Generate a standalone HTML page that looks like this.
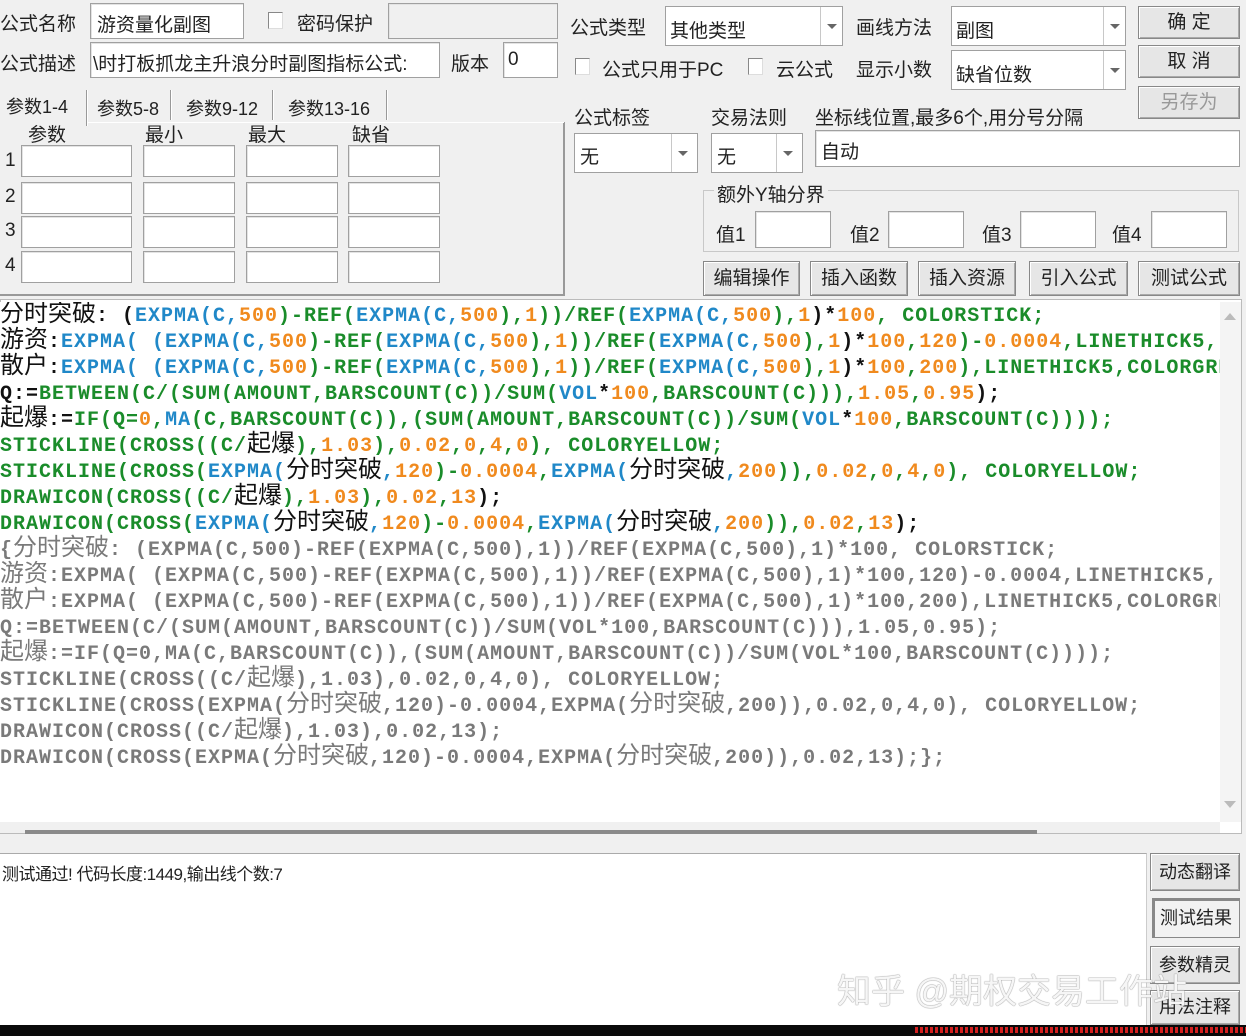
<!DOCTYPE html>
<html><head><meta charset="utf-8">
<style>
*{box-sizing:border-box;margin:0;padding:0}
body{width:1246px;height:1036px;background:#f0f0f0;position:relative;overflow:hidden;font-family:"Liberation Sans","Noto Sans CJK SC",sans-serif;font-size:19px;color:#222}
.a{position:absolute;white-space:nowrap}
.in{position:absolute;background:#fff;border:1px solid #a0a0a0;box-shadow:inset 1px 1px 0 #e3e3e3}
.dd{position:absolute;background:#fff;border:1px solid #a0a0a0}
.dd .ar{position:absolute;right:0;top:0;bottom:0;width:22px;border-left:1px solid #c8c8c8}
.dd .ar:after{content:"";position:absolute;left:6px;top:50%;margin-top:-2px;border-left:5px solid transparent;border-right:5px solid transparent;border-top:5px solid #666}
.btn{position:absolute;background:#e6e6e6;border:1px solid #888;box-shadow:inset 1px 1px 0 #fff,inset -1px -1px 0 #aaa;text-align:center;font-size:19px;color:#222}
.cb{position:absolute;width:15px;height:17px;border:1px solid #888;background:#fff;border-right-color:#ddd;border-bottom-color:#ddd}
#code{position:absolute;left:0;top:302px;width:1220px;height:520px;background:#fff;overflow:hidden}
.ln{position:absolute;left:0;height:26px;white-space:pre;font-family:"Liberation Mono","Noto Sans CJK SC",monospace;font-weight:bold;font-size:20px;letter-spacing:1px;line-height:26px}
.z{font-family:"Noto Sans CJK SC",sans-serif;font-weight:normal;font-size:24px;letter-spacing:0;line-height:0}
.b{color:#2088c8}.g{color:#1a8c2a}.o{color:#f08a1e}.k{color:#111}
.gr{color:#7a7a7a}
.sep{position:absolute;top:90px;width:2px;height:30px;background:#999;border-right:1px solid #fff}
</style></head><body>

<div class="a" style="left:0;top:9px">公式名称</div>
<div class="in" style="left:90px;top:3px;width:154px;height:36px"><span class="a" style="left:6px;top:6px">游资量化副图</span></div>
<div class="cb" style="left:268px;top:12px"></div>
<div class="a" style="left:297px;top:9px">密码保护</div>
<div class="in" style="left:388px;top:3px;width:170px;height:36px;background:#f0f0f0"></div>

<div class="a" style="left:0;top:49px">公式描述</div>
<div class="in" style="left:90px;top:42px;width:350px;height:36px;overflow:hidden"><span class="a" style="left:2px;top:6px">\时打板抓龙主升浪分时副图指标公式:</span></div>
<div class="a" style="left:451px;top:49px">版本</div>
<div class="in" style="left:503px;top:42px;width:55px;height:36px"><span class="a" style="left:4px;top:6px">0</span></div>

<div class="a" style="left:570px;top:13px">公式类型</div>
<div class="dd" style="left:665px;top:6px;width:178px;height:40px"><span class="a" style="left:4px;top:9px">其他类型</span><div class="ar"></div></div>
<div class="a" style="left:856px;top:13px">画线方法</div>
<div class="dd" style="left:951px;top:6px;width:175px;height:40px"><span class="a" style="left:4px;top:9px">副图</span><div class="ar"></div></div>

<div class="cb" style="left:575px;top:58px"></div>
<div class="a" style="left:602px;top:55px">公式只用于PC</div>
<div class="cb" style="left:748px;top:58px"></div>
<div class="a" style="left:776px;top:55px">云公式</div>
<div class="a" style="left:856px;top:55px">显示小数</div>
<div class="dd" style="left:951px;top:50px;width:175px;height:40px"><span class="a" style="left:4px;top:9px">缺省位数</span><div class="ar"></div></div>

<div class="btn" style="left:1138px;top:6px;width:102px;height:33px;line-height:31px">确 定</div>
<div class="btn" style="left:1138px;top:45px;width:102px;height:33px;line-height:31px">取 消</div>
<div class="btn" style="left:1138px;top:86px;width:102px;height:33px;line-height:31px;color:#999">另存为</div>

<div class="a" style="left:6px;top:93px;font-size:18px">参数1-4</div>
<div class="sep" style="left:86px;height:36px"></div>
<div class="a" style="left:97px;top:95px;font-size:18px">参数5-8</div>
<div class="sep" style="left:170px"></div>
<div class="a" style="left:186px;top:95px;font-size:18px">参数9-12</div>
<div class="sep" style="left:272px"></div>
<div class="a" style="left:288px;top:95px;font-size:18px">参数13-16</div>
<div class="sep" style="left:386px"></div>
<div style="position:absolute;left:0;top:122px;width:565px;height:174px;border-right:2px solid #999;border-bottom:2px solid #999"></div>
<div style="position:absolute;left:88px;top:122px;width:476px;height:1px;background:#fff"></div>
<div class="a" style="left:28px;top:120px">参数</div>
<div class="a" style="left:145px;top:120px">最小</div>
<div class="a" style="left:248px;top:120px">最大</div>
<div class="a" style="left:352px;top:120px">缺省</div>
<div class="a" style="left:5px;top:150px">1</div>
<div class="a" style="left:5px;top:186px">2</div>
<div class="a" style="left:5px;top:220px">3</div>
<div class="a" style="left:5px;top:255px">4</div>
<div class="in" style="left:21px;top:145px;width:111px;height:32px"></div><div class="in" style="left:143px;top:145px;width:92px;height:32px"></div><div class="in" style="left:246px;top:145px;width:92px;height:32px"></div><div class="in" style="left:348px;top:145px;width:92px;height:32px"></div>
<div class="in" style="left:21px;top:182px;width:111px;height:32px"></div><div class="in" style="left:143px;top:182px;width:92px;height:32px"></div><div class="in" style="left:246px;top:182px;width:92px;height:32px"></div><div class="in" style="left:348px;top:182px;width:92px;height:32px"></div>
<div class="in" style="left:21px;top:216px;width:111px;height:32px"></div><div class="in" style="left:143px;top:216px;width:92px;height:32px"></div><div class="in" style="left:246px;top:216px;width:92px;height:32px"></div><div class="in" style="left:348px;top:216px;width:92px;height:32px"></div>
<div class="in" style="left:21px;top:251px;width:111px;height:32px"></div><div class="in" style="left:143px;top:251px;width:92px;height:32px"></div><div class="in" style="left:246px;top:251px;width:92px;height:32px"></div><div class="in" style="left:348px;top:251px;width:92px;height:32px"></div>

<div class="a" style="left:574px;top:103px">公式标签</div>
<div class="a" style="left:711px;top:103px">交易法则</div>
<div class="a" style="left:815px;top:103px">坐标线位置,最多6个,用分号分隔</div>
<div class="dd" style="left:574px;top:133px;width:124px;height:40px"><span class="a" style="left:5px;top:8px">无</span><div class="ar" style="width:26px"></div></div>
<div class="dd" style="left:711px;top:133px;width:92px;height:40px"><span class="a" style="left:5px;top:8px">无</span><div class="ar" style="width:26px"></div></div>
<div class="in" style="left:815px;top:130px;width:425px;height:37px"><span class="a" style="left:5px;top:6px">自动</span></div>
<div style="position:absolute;left:703px;top:190px;width:536px;height:62px;border:1px solid #c8c8c8"></div>
<div class="a" style="left:714px;top:180px;background:#f0f0f0;padding:0 3px">额外Y轴分界</div>
<div class="a" style="left:716px;top:220px">值1</div><div class="in" style="left:755px;top:211px;width:76px;height:37px"></div>
<div class="a" style="left:850px;top:220px">值2</div><div class="in" style="left:888px;top:211px;width:76px;height:37px"></div>
<div class="a" style="left:982px;top:220px">值3</div><div class="in" style="left:1020px;top:211px;width:76px;height:37px"></div>
<div class="a" style="left:1112px;top:220px">值4</div><div class="in" style="left:1151px;top:211px;width:76px;height:37px"></div>
<div class="btn" style="left:703px;top:261px;width:97px;height:35px;line-height:33px">编辑操作</div>
<div class="btn" style="left:810px;top:261px;width:98px;height:35px;line-height:33px">插入函数</div>
<div class="btn" style="left:918px;top:261px;width:98px;height:35px;line-height:33px">插入资源</div>
<div class="btn" style="left:1029px;top:261px;width:99px;height:35px;line-height:33px">引入公式</div>
<div class="btn" style="left:1138px;top:261px;width:102px;height:35px;line-height:33px">测试公式</div>

<div style="position:absolute;left:0;top:299px;width:1242px;height:535px;border:1px solid #bbb;background:#fff"></div>
<div id="code">
<div class="ln" style="top:2px"><span class="k"><span class="z">分时突破</span>: (</span><span class="b">EXPMA(C,</span><span class="o">500</span><span class="g">)-REF(</span><span class="b">EXPMA(C,</span><span class="o">500</span><span class="g">),</span><span class="o">1</span><span class="g">))/REF(</span><span class="b">EXPMA(C,</span><span class="o">500</span><span class="g">),</span><span class="o">1</span><span class="k">)*</span><span class="o">100</span><span class="g">, COLORSTICK;</span></div>
<div class="ln" style="top:28px"><span class="k"><span class="z">游资</span>:</span><span class="b">EXPMA( (EXPMA(C,</span><span class="o">500</span><span class="g">)-REF(</span><span class="b">EXPMA(C,</span><span class="o">500</span><span class="g">),</span><span class="o">1</span><span class="g">))/REF(</span><span class="b">EXPMA(C,</span><span class="o">500</span><span class="g">),</span><span class="o">1</span><span class="k">)*</span><span class="o">100</span><span class="g">,</span><span class="o">120</span><span class="g">)-</span><span class="o">0.0004</span><span class="g">,LINETHICK5,</span></div>
<div class="ln" style="top:54px"><span class="k"><span class="z">散户</span>:</span><span class="b">EXPMA( (EXPMA(C,</span><span class="o">500</span><span class="g">)-REF(</span><span class="b">EXPMA(C,</span><span class="o">500</span><span class="g">),</span><span class="o">1</span><span class="g">))/REF(</span><span class="b">EXPMA(C,</span><span class="o">500</span><span class="g">),</span><span class="o">1</span><span class="k">)*</span><span class="o">100</span><span class="g">,</span><span class="o">200</span><span class="g">),LINETHICK5,COLORGREEN</span></div>
<div class="ln" style="top:80px"><span class="k">Q:=</span><span class="g">BETWEEN(C/(SUM(AMOUNT,BARSCOUNT(C))/SUM(</span><span class="b">VOL</span><span class="k">*</span><span class="o">100</span><span class="g">,BARSCOUNT(C))),</span><span class="o">1.05</span><span class="g">,</span><span class="o">0.95</span><span class="k">);</span></div>
<div class="ln" style="top:106px"><span class="k"><span class="z">起爆</span>:=</span><span class="g">IF(Q=</span><span class="o">0</span><span class="g">,</span><span class="b">MA</span><span class="g">(C,BARSCOUNT(C)),(SUM(AMOUNT,BARSCOUNT(C))/SUM(</span><span class="b">VOL</span><span class="k">*</span><span class="o">100</span><span class="g">,BARSCOUNT(C))));</span></div>
<div class="ln" style="top:132px"><span class="g">STICKLINE(CROSS((C/<span class="z k">起爆</span>),</span><span class="o">1.03</span><span class="g">),</span><span class="o">0.02</span><span class="g">,</span><span class="o">0</span><span class="g">,</span><span class="o">4</span><span class="g">,</span><span class="o">0</span><span class="g">), COLORYELLOW;</span></div>
<div class="ln" style="top:158px"><span class="g">STICKLINE(CROSS(</span><span class="b">EXPMA(<span class="z k">分时突破</span>,</span><span class="o">120</span><span class="g">)-</span><span class="o">0.0004</span><span class="g">,</span><span class="b">EXPMA(<span class="z k">分时突破</span>,</span><span class="o">200</span><span class="g">)),</span><span class="o">0.02</span><span class="g">,</span><span class="o">0</span><span class="g">,</span><span class="o">4</span><span class="g">,</span><span class="o">0</span><span class="g">), COLORYELLOW;</span></div>
<div class="ln" style="top:184px"><span class="g">DRAWICON(CROSS((C/<span class="z k">起爆</span>),</span><span class="o">1.03</span><span class="g">),</span><span class="o">0.02</span><span class="g">,</span><span class="o">13</span><span class="k">);</span></div>
<div class="ln" style="top:210px"><span class="g">DRAWICON(CROSS(</span><span class="b">EXPMA(<span class="z k">分时突破</span>,</span><span class="o">120</span><span class="g">)-</span><span class="o">0.0004</span><span class="g">,</span><span class="b">EXPMA(<span class="z k">分时突破</span>,</span><span class="o">200</span><span class="g">)),</span><span class="o">0.02</span><span class="g">,</span><span class="o">13</span><span class="k">);</span></div>
<div class="ln gr" style="top:236px">{<span class="z">分时突破</span>: (EXPMA(C,500)-REF(EXPMA(C,500),1))/REF(EXPMA(C,500),1)*100, COLORSTICK;</div>
<div class="ln gr" style="top:262px"><span class="z">游资</span>:EXPMA( (EXPMA(C,500)-REF(EXPMA(C,500),1))/REF(EXPMA(C,500),1)*100,120)-0.0004,LINETHICK5,</div>
<div class="ln gr" style="top:288px"><span class="z">散户</span>:EXPMA( (EXPMA(C,500)-REF(EXPMA(C,500),1))/REF(EXPMA(C,500),1)*100,200),LINETHICK5,COLORGREEN</div>
<div class="ln gr" style="top:314px">Q:=BETWEEN(C/(SUM(AMOUNT,BARSCOUNT(C))/SUM(VOL*100,BARSCOUNT(C))),1.05,0.95);</div>
<div class="ln gr" style="top:340px"><span class="z">起爆</span>:=IF(Q=0,MA(C,BARSCOUNT(C)),(SUM(AMOUNT,BARSCOUNT(C))/SUM(VOL*100,BARSCOUNT(C))));</div>
<div class="ln gr" style="top:366px">STICKLINE(CROSS((C/<span class="z">起爆</span>),1.03),0.02,0,4,0), COLORYELLOW;</div>
<div class="ln gr" style="top:392px">STICKLINE(CROSS(EXPMA(<span class="z">分时突破</span>,120)-0.0004,EXPMA(<span class="z">分时突破</span>,200)),0.02,0,4,0), COLORYELLOW;</div>
<div class="ln gr" style="top:418px">DRAWICON(CROSS((C/<span class="z">起爆</span>),1.03),0.02,13);</div>
<div class="ln gr" style="top:444px">DRAWICON(CROSS(EXPMA(<span class="z">分时突破</span>,120)-0.0004,EXPMA(<span class="z">分时突破</span>,200)),0.02,13);};</div>
</div>
<div style="position:absolute;left:1220px;top:302px;width:21px;height:520px;background:#f4f4f4"></div>
<div style="position:absolute;left:1224px;top:313px;border-left:6px solid transparent;border-right:6px solid transparent;border-bottom:7px solid #bbb"></div>
<div style="position:absolute;left:1224px;top:801px;border-left:6px solid transparent;border-right:6px solid transparent;border-top:7px solid #bbb"></div>
<div style="position:absolute;left:0;top:822px;width:1220px;height:11px;background:#f0f0f0"></div>
<div style="position:absolute;left:25px;top:830px;width:1012px;height:4px;background:#8a8a8a"></div>

<div style="position:absolute;left:0;top:853px;width:1147px;height:172px;background:#fff;border-top:1px solid #aaa;border-right:1px solid #ccc"></div>
<div class="a" style="left:2px;top:860px;font-size:17px;letter-spacing:-0.5px">测试通过! 代码长度:1449,输出线个数:7</div>
<div class="btn" style="left:1150px;top:853px;width:90px;height:38px;line-height:36px;font-size:18px">动态翻译</div>
<div class="btn" style="left:1152px;top:898px;width:88px;height:40px;line-height:38px;font-size:18px;background:#f2f2f2;box-shadow:inset 2px 2px 0 #888">测试结果</div>
<div class="btn" style="left:1150px;top:946px;width:90px;height:38px;line-height:36px;font-size:18px">参数精灵</div>
<div class="btn" style="left:1150px;top:990px;width:90px;height:35px;line-height:33px;font-size:18px">用法注释</div>
<div class="a" style="left:837px;top:964px;font-size:34px;color:rgba(255,255,255,0.92);text-shadow:0 0 1px #888,0 0 1px #888">知乎 @期权交易工作站</div>

<div style="position:absolute;left:0;top:1025px;width:1246px;height:11px;background:#0a0a0a"></div>
<div style="position:absolute;left:915px;top:1027px;width:331px;height:6px;background:repeating-linear-gradient(90deg,#d42020 0 3px,#0a0a0a 3px 5px)"></div>
</body></html>
